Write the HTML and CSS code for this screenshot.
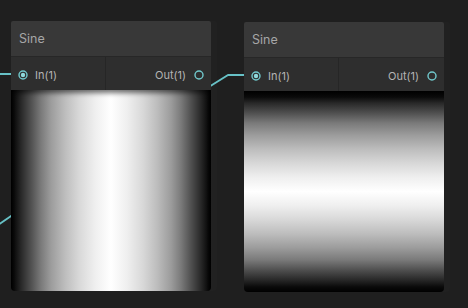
FILE: index.html
```html
<!DOCTYPE html>
<html>
<head>
<meta charset="utf-8">
<link rel="stylesheet" href="styles.css">
</head>
<body>
<div class="canvas">
  <svg class="edges" width="468" height="308" viewBox="0 0 468 308">
    <path d="M -2 74 L 20 74" />
    <path d="M 196 95 L 228 75 L 254 75" />
    <path d="M -2 225 L 14 214" />
  </svg>

  <div class="node node-a">
    <div class="title">Sine</div>
    <div class="ports">
      <div class="port port-in">
        <svg class="dot" width="12" height="12" viewBox="0 0 12 12"><circle cx="6" cy="6" r="4" class="ring"/><circle cx="6" cy="6" r="2.2" class="fill"/></svg>
        <span>In(1)</span>
      </div>
      <div class="port port-out">
        <span>Out(1)</span>
        <svg class="dot" width="12" height="12" viewBox="0 0 12 12"><circle cx="6" cy="6" r="4" class="ring"/></svg>
      </div>
    </div>
    <div class="preview preview-h"></div>
  </div>

  <div class="node node-b">
    <div class="title">Sine</div>
    <div class="ports">
      <div class="port port-in">
        <svg class="dot" width="12" height="12" viewBox="0 0 12 12"><circle cx="6" cy="6" r="4" class="ring"/><circle cx="6" cy="6" r="2.2" class="fill"/></svg>
        <span>In(1)</span>
      </div>
      <div class="port port-out">
        <span>Out(1)</span>
        <svg class="dot" width="12" height="12" viewBox="0 0 12 12"><circle cx="6" cy="6" r="4" class="ring"/></svg>
      </div>
    </div>
    <div class="preview preview-v"></div>
  </div>
</div>
</body>
</html>
```

FILE: styles.css
```css
html, body {
  margin: 0;
  padding: 0;
  background: #1f1f1f;
}
body {
  font-family: Inter, "Noto Sans", sans-serif;
  width: 468px;
  height: 308px;
  overflow: hidden;
}
.canvas {
  position: relative;
  width: 468px;
  height: 308px;
}
.edges {
  position: absolute;
  left: 0;
  top: 0;
}
.edges path {
  fill: none;
  stroke: #67c1c6;
  stroke-width: 2;
  stroke-linejoin: round;
}
.node {
  position: absolute;
  width: 200px;
  display: flex;
  flex-direction: column;
  border-radius: 2px 2px 4px 4px;
  box-shadow: 6px 0 0 0 rgba(255,255,255,0.012);
}
.node-a { left: 11px; top: 21px; }
.node-b { left: 244px; top: 22px; }
.title {
  height: 35px;
  background: #383838;
  border-bottom: 1px solid #272727;
  color: #a6a6a6;
  font-size: 12.5px;
  line-height: 35px;
  padding-left: 8px;
  border-radius: 2px 2px 0 0;
}
.ports {
  height: 33px;
  background: #2e2e2e;
  display: grid;
  grid-template-columns: 95px 1fr;
}
.port {
  display: flex;
  align-items: center;
  gap: 6px;
  color: #b4b4b4;
  font-size: 11px;
  padding-top: 2px;
}
.port-in {
  padding-left: 6px;
  border-right: 1px solid #262626;
}
.port-out {
  justify-content: flex-end;
  padding-right: 6px;
  gap: 7px;
}
.dot .ring {
  fill: none;
  stroke: #71c9cd;
  stroke-width: 1.4;
}
.dot .fill {
  fill: #8fd9dc;
}
.preview {
  height: 201px;
  border-radius: 0 0 4px 4px;
}
.preview-h {
  background: linear-gradient(to right,
    #000 0%, #0a0a0a 1.5%, #282828 5%, #505050 10%, #7a7a7a 15%,
    #9c9c9c 20%, #bdbdbd 27%, #d8d8d8 34%, #efefef 42%, #ffffff 50%,
    #efefef 58%, #d8d8d8 66%, #bdbdbd 73%, #9c9c9c 80%, #7a7a7a 85%,
    #505050 90%, #282828 95%, #0a0a0a 98.5%, #000 100%);
  box-shadow: inset 0 5px 5px -2px rgba(0,0,0,0.55);
}
.preview-v {
  background: linear-gradient(to bottom,
    #000 0%, #0a0a0a 3%, #282828 6%, #505050 11%, #7a7a7a 16%,
    #9c9c9c 22%, #bdbdbd 29%, #d8d8d8 36%, #efefef 43%, #ffffff 50%,
    #efefef 57%, #d8d8d8 64%, #bdbdbd 71%, #9c9c9c 78%, #7a7a7a 84%,
    #505050 89%, #282828 94%, #0a0a0a 97.5%, #000 100%);
}
```
